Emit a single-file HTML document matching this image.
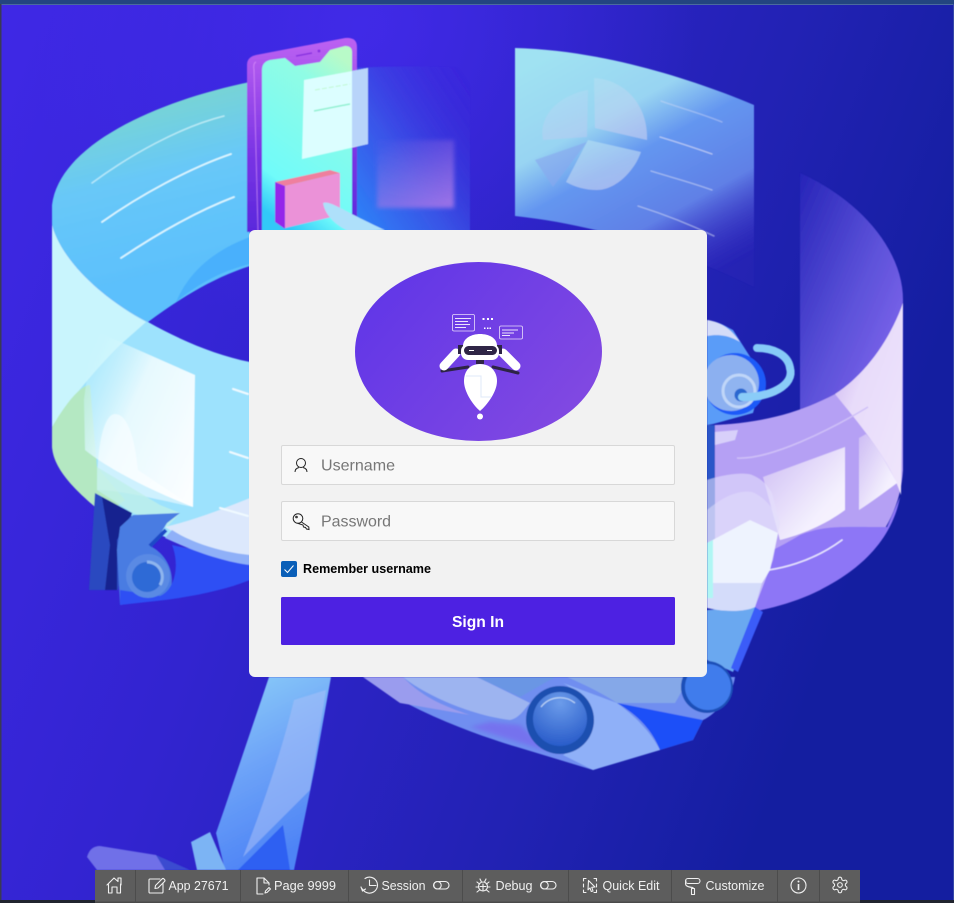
<!DOCTYPE html>
<html><head><meta charset="utf-8"><title>Sign In</title>
<style>
html,body{margin:0;padding:0;width:954px;height:903px;overflow:hidden;background:#151ea0}
svg{position:absolute;left:0;top:0;display:block}
text{font-family:"Liberation Sans",sans-serif}
</style></head><body>
<svg width="954" height="903" viewBox="0 0 954 903" xmlns="http://www.w3.org/2000/svg">
<defs>
<linearGradient id="bg" x1="0" y1="0" x2="1" y2=".35"><stop offset="0" stop-color="#3f28e6"/><stop offset=".4" stop-color="#3224d0"/><stop offset=".75" stop-color="#2222b4"/><stop offset="1" stop-color="#141ea0"/></linearGradient>
<radialGradient id="bg2" cx="0.38" cy="0.03" r="0.35"><stop offset="0" stop-color="#462cf0" stop-opacity=".7"/><stop offset="1" stop-color="#462cf0" stop-opacity="0"/></radialGradient>
<linearGradient id="lb" x1="0.45" y1="0.05" x2="0.6" y2="0.8"><stop offset="0" stop-color="#7ad6cf"/><stop offset=".45" stop-color="#68c8f8"/><stop offset="1" stop-color="#5cc0fc"/></linearGradient>
<linearGradient id="fade" x1="0" y1="1" x2="1" y2="0.1"><stop offset="0" stop-color="#2c8cfa"/><stop offset=".45" stop-color="#3a5cea" stop-opacity=".85"/><stop offset="1" stop-color="#3a30d8" stop-opacity="0"/></linearGradient>
<linearGradient id="pk" x1=".2" y1="0" x2=".8" y2="1"><stop offset="0" stop-color="#a878e0" stop-opacity=".05"/><stop offset="1" stop-color="#a878e8" stop-opacity=".85"/></linearGradient>
<linearGradient id="scr" x1="0.7" y1="0" x2="0.35" y2="1"><stop offset="0" stop-color="#b8fac8"/><stop offset=".2" stop-color="#90fce4"/><stop offset=".8" stop-color="#70fbfa"/><stop offset="1" stop-color="#30c8f8"/></linearGradient>
<linearGradient id="ph" x1="0" y1="0" x2="0" y2="1"><stop offset="0" stop-color="#bd62f2"/><stop offset=".6" stop-color="#7a34e4"/><stop offset="1" stop-color="#5a28dc"/></linearGradient>
<linearGradient id="chart" x1="0.2" y1="0" x2="0.75" y2="1"><stop offset="0" stop-color="#a0e2f2"/><stop offset=".3" stop-color="#98d4f2"/><stop offset=".47" stop-color="#6496f0"/><stop offset=".72" stop-color="#6080e6"/><stop offset="1" stop-color="#3c28c4" stop-opacity=".15"/></linearGradient>
<linearGradient id="pie" x1="0" y1="0" x2="0.4" y2="1"><stop offset="0" stop-color="#b0e0f4"/><stop offset="1" stop-color="#bccaf2"/></linearGradient>
<linearGradient id="rp" x1="0" y1="0" x2="1" y2="1"><stop offset="0" stop-color="#2624b8"/><stop offset=".5" stop-color="#5a50d8"/><stop offset="1" stop-color="#8a6cf2"/></linearGradient>
<linearGradient id="pale" x1="0" y1="0" x2="1" y2="1"><stop offset="0" stop-color="#c4a8ee"/><stop offset=".4" stop-color="#e8dcfa"/><stop offset="1" stop-color="#efe6fc"/></linearGradient>
<linearGradient id="wp" x1="0" y1="0" x2="1" y2="1"><stop offset="0" stop-color="#cdbcf4"/><stop offset=".7" stop-color="#f4f0fe"/><stop offset="1" stop-color="#f8f6ff"/></linearGradient>
<linearGradient id="wl" x1="0" y1="0.2" x2="1" y2=".9"><stop offset="0" stop-color="#c9f5fd" stop-opacity=".3"/><stop offset=".4" stop-color="#e6f9fe"/><stop offset="1" stop-color="#fcfeff"/></linearGradient>
<linearGradient id="leg" x1="0" y1="0" x2="0.3" y2="1"><stop offset="0" stop-color="#8ccff8"/><stop offset=".5" stop-color="#6ea4f8"/><stop offset="1" stop-color="#4e84f6"/></linearGradient>
<radialGradient id="knob" cx=".5" cy=".2" r=".85"><stop offset="0" stop-color="#6c9cea"/><stop offset="1" stop-color="#2558c8"/></radialGradient>
<linearGradient id="ell" x1="0" y1="0" x2="1" y2="0.6"><stop offset="0" stop-color="#5d34e8"/><stop offset="1" stop-color="#8048e2"/></linearGradient>
<filter id="s"><feGaussianBlur stdDeviation=".6"/></filter>
<filter id="s2"><feGaussianBlur stdDeviation="2"/></filter>
</defs>

<rect width="954" height="903" fill="url(#bg)"/>
<rect width="954" height="903" fill="url(#bg2)"/>

<g filter="url(#s)">
<!-- faded panel behind phone -->
<path d="M350,68 C390,66 430,66 470,68 L470,232 L350,232Z" fill="url(#fade)"/>
<rect x="377" y="140" width="77" height="68" fill="url(#pk)" filter="url(#s2)"/>

<!-- left blue band -->
<path d="M250,82 C170,98 60,140 52,205 L52,225 C62,262 105,300 148,322 C180,298 215,277 250,266Z" fill="url(#lb)"/>
<path d="M176,302 C200,282 225,270 250,264 L250,237 C215,250 190,270 176,302Z" fill="#46aefc" opacity=".9"/>
<g fill="none" stroke="#e8fbff" stroke-linecap="round">
<path d="M92,183 C130,155 180,127 224,116" stroke-width="1.500" opacity=".6"/>
<path d="M102,222 C140,195 190,168 231,154" stroke-width="1.800" opacity=".9"/>
<path d="M121,258 C160,232 200,210 234,197" stroke-width="1.800" opacity=".9"/>
</g>
<!-- pale band lower -->
<path d="M52,225 C62,262 105,300 148,322 C180,340 215,355 250,362 L250,560 C200,553 120,525 80,490 C62,472 52,455 52,445Z" fill="#9de2fd"/>
<path d="M52,225 C62,262 105,300 146,322 L120,345 C95,370 70,400 52,427Z" fill="#c9f5fd"/>
<path d="M52,427 C65,405 80,385 90,385 L97,467 L125,500 L105,515 C80,495 52,470 52,445Z" fill="#b4e8c2"/>
<path d="M93,330 L195,375 L193,507 C150,490 110,470 85,450 L84,400 Z" fill="url(#wl)"/>
<path d="M97,490 C97,440 105,414 115,414 C128,414 135,440 138,470 L193,507 C160,500 120,490 97,490Z" fill="#fff" opacity=".5"/>
<path d="M97,467 L160,505 L180,513 L167,527 L133,513 L97,490Z" fill="#bff0ea" opacity=".8"/>
<path d="M165,527 C195,520 225,508 250,498 L250,558 C220,552 190,542 165,527Z" fill="#dce8fc"/>
<g stroke="#f0faff" stroke-width="2" stroke-linecap="round"><path d="M233,389 L248,394"/><path d="M230,452 L248,458"/><path d="M220,508 L248,516"/></g>

<!-- left robot fragment -->
<path d="M95,493 L132,513 L118,590 L89,590 Z" fill="#2a48c0"/>
<path d="M102,497 L132,513 L117,540 L117,590 L105,590 L110,545Z" fill="#18248f"/>
<path d="M120,527 L133,515 L180,513 L167,523 L152,547 C172,558 178,585 165,598 L120,605 L117,550Z" fill="#4a7ce2"/>
<path d="M120,590 L120,605 L165,600 C195,596 225,590 250,580 L250,560 C220,555 195,550 172,545 C180,565 175,590 160,596Z" fill="#2f50f4"/>
<path d="M165,538 C195,552 225,562 250,565 L250,555 C220,552 190,542 172,530Z" fill="#8fb0f8"/>
<circle cx="148" cy="576" r="22" fill="#5a8ae4"/><circle cx="147" cy="577" r="15" fill="#2f6ad6"/><path d="M147,562 A15,15 0 0 1 160,585" stroke="#8fb6ee" stroke-width="3" fill="none"/>
<path d="M150,546 L166,530" stroke="#1a4ac8" stroke-width="4"/>

<!-- phone -->
<path d="M247,65 Q247,57 256,55 L345,38 Q357,37 357,47 L357,232 L247,232Z" fill="url(#ph)"/>
<path d="M262,70 Q262,62 270,60 L285,58 L295,66 L320,62 L330,50 L345,46 Q352,46 352,52 L352,232 L262,232Z" fill="url(#scr)"/>
<path d="M256,62 Q253,63 254,70 L258,232" stroke="#f0a8ff" stroke-width="1" fill="none" opacity=".5"/>
<path d="M296,56 L312,53" stroke="#8a30e0" stroke-width="1.600"/><circle cx="319" cy="51" r="1.500" fill="#8a30e0"/>
<!-- doc -->
<path d="M304,80 L368,68 L368,144 L302,159Z" fill="#dcfeff"/>
<path d="M352,71 L368,68 L368,144 L352,147Z" fill="#b8d4fa"/>
<path d="M314,111 L350,104" stroke="#8ef0d0" stroke-width="1.500"/>
<path d="M315,90 L350,84" stroke="#c0f8d0" stroke-width="1" stroke-dasharray="5 2"/>
<!-- box -->
<path d="M275,182 L330,170 L340,173 L285,186Z" fill="#ef7f9e"/>
<path d="M285,186 L340,173 L340,215 L285,228Z" fill="#eb92d8"/>
<path d="M275,182 L285,186 L285,229 L275,222Z" fill="#9428ea"/>
<path d="M323,203 C330,200 345,212 385,230 L350,232 C335,225 325,215 323,203Z" fill="#aee0fa"/>

<!-- right chart panel -->
<path d="M515,48 C600,50 690,78 754,105 L754,287 C690,255 600,225 515,216Z" fill="url(#chart)"/>
<g fill="url(#pie)" opacity=".7">
<path d="M594,78 C625,80 648,105 647,140 L595,128Z"/>
<path d="M588,90 L587,137 L543,140 C538,115 560,95 588,90Z" opacity=".7"/>
<path d="M587,142 L553,187 L535,160Z" fill="#88a8ee" opacity=".9"/>
<path d="M588,140 L641,152 C634,172 615,190 597,190 C585,190 575,187 566,182Z"/>
</g>
<g stroke="#d4dcf6" stroke-width="1.300" stroke-linecap="round" fill="none">
<path d="M661,101 C680,108 700,113 722,122" opacity=".45"/>
<path d="M660,137 C680,143 695,148 712,154" opacity=".7"/>
<path d="M651,171 C670,177 690,182 712,190" opacity=".55"/>
<path d="M638,206 C660,213 685,222 714,236" opacity=".55"/>
</g>

<!-- right band -->
<path d="M800,173 C860,200 903,250 903,300 L903,305 C885,350 860,380 833,395 L800,413Z" fill="url(#rp)"/>
<path d="M715,425 C760,423 800,413 835,394 C865,375 890,340 903,303 L903,470 C900,520 870,560 820,590 C790,605 750,615 715,615Z" fill="#b5a0f4"/>
<path d="M835,394 C865,375 890,340 903,303 L901,495 C890,460 860,425 835,394Z" fill="url(#pale)"/>
<path d="M763,477 L845,447 L845,510 C825,525 800,535 780,540Z" fill="url(#wp)"/>
<path d="M859,438 L866,434 C880,450 890,470 897,483 C885,492 870,503 859,510Z" fill="url(#wp)"/>
<path d="M900,497 C892,540 860,570 820,590 C790,605 750,615 715,615 L715,572 C745,565 775,550 800,535 C825,525 840,527 887,527Z" fill="#8d76f6"/>
<path d="M742,572 C780,572 815,560 842,540" stroke="#e8e4fe" stroke-width="1.600" fill="none" stroke-linecap="round"/>
<path d="M737,458 C770,460 830,430 868,407" stroke="#cfc0f8" stroke-width="1.500" fill="none"/>

<!-- right joint -->
<path d="M707,320 C720,322 725,326 733,330 L763,377 L753,413 L713,424 L707,425Z" fill="#5a9cf8"/>
<path d="M707,320 C722,322 732,330 740,342 C728,335 718,334 707,336Z" fill="#d4dcf8"/>
<path d="M757,348 C772,348 788,354 790,368" stroke="#86caf8" stroke-width="8" fill="none" stroke-linecap="round"/>
<circle cx="735" cy="384" r="31" fill="#1c5af8"/>
<circle cx="731" cy="383" r="28" fill="#8cb0f0"/>
<circle cx="739" cy="391" r="16" fill="#90b4f0" stroke="#c0d6f8" stroke-width="3"/>
<circle cx="741" cy="395" r="6.500" fill="#2a68d0"/>
<path d="M742,397 C770,398 795,385 790,368" stroke="#8accf8" stroke-width="8" fill="none" stroke-linecap="round"/>
<path d="M707,425 L715,425 L715,540 L707,545Z" fill="#2a56c8"/>
<path d="M715,432 L738,430 L735,440 L715,445Z" fill="#d8d0fa"/>

<!-- lower body -->
<path d="M363,677 L735,677 C733,695 715,715 703,720 L693,740 L593,770 L517,747 C470,733 410,710 363,677Z" fill="#6f8ef0"/>
<path d="M363,677 L403,677 C420,695 440,705 470,715 L400,703Z" fill="#9a9cee"/>
<path d="M403,677 C425,695 470,715 510,720 C520,718 525,708 530,703 L477,677Z" fill="#9db4f0"/>
<path d="M477,677 L555,677 L520,697Z" fill="#6a96e4"/>
<path d="M470,727 L550,752 L520,725 L490,722Z" fill="#7a5cee" opacity=".55" filter="url(#s2)"/>
<path d="M563,683 L617,703 C640,720 652,735 660,750 L593,770 L563,755 C585,745 595,700 563,683Z" fill="#8fb0f8"/>
<path d="M567,677 L690,677 L675,703 L617,703 C600,692 585,685 567,677Z" fill="#85a8e8"/>
<path d="M617,703 L703,720 L693,740 L660,750 C652,730 638,715 617,703Z" fill="#1e50f8"/>
<!-- arm below joint -->
<path d="M707,610 L755,607 L740,655 L733,672 L707,660Z" fill="#6aa8f0"/>
<path d="M755,607 L763,612 L738,672 L731,668Z" fill="#3a5cf8"/>
<circle cx="707" cy="687" r="26" fill="#1c50b8"/><circle cx="708" cy="687" r="23" fill="#3f7cec"/>
<circle cx="560" cy="720" r="34" fill="#1c50b0"/>
<path d="M585,698 A34,34 0 0 1 545,751 A34,34 0 0 0 585,698Z" fill="#7a70b8"/>
<circle cx="560" cy="719" r="27" fill="url(#knob)"/>
<path d="M541,707 A24,24 0 0 1 575,703" stroke="#bcd4f6" stroke-width="1.200" fill="none"/>

<!-- leg -->
<path d="M269,677 L331,677 L315,767 L294,870 L225,870 L216,833 L225,807Z" fill="url(#leg)"/>
<path d="M294,700 L326,690 L310,790 L243,857 C265,800 282,750 294,700Z" fill="#a8c0f8" opacity=".55"/>
<path d="M283,825 L290,870 L238,870Z" fill="#2d60f2"/>
<path d="M191,842 L210,832 L226,870 L197,870Z" fill="#7cb4f4"/>
<path d="M87,857 Q90,846 100,846 L156,855 L170,870 L97,870Z" fill="#6f70e8"/>
<path d="M156,855 L190,870 L165,870Z" fill="#3a4cd0"/>

<!-- right arm (over band) -->
<path d="M707,480 C725,474 745,472 752,475 C765,480 770,490 772,493 L780,523 L773,560 L755,607 C745,612 725,612 707,608Z" fill="#e4dffb" opacity=".6"/>
<path d="M707,510 C725,495 740,490 752,492 C765,497 775,510 780,523 L778,533 L750,520 L707,543Z" fill="#e4e0fb" opacity=".5"/>
<path d="M707,543 L750,520 L778,533 L770,570 L762,583 L707,583Z" fill="#eef3fe"/>
<path d="M707,583 L762,583 L755,607 C745,612 725,612 707,608Z" fill="#d4dcfa"/>
<path d="M707,543 L713,540 L713,598 L707,598Z" fill="#b0f6f4"/>
</g>

<!-- frame -->
<rect x="0" y="0" width="954" height="4" fill="#234580"/>
<rect x="0" y="4" width="954" height="1" fill="#4a6a9e"/>
<rect x="0" y="4" width="1.500" height="899" fill="#3a3a55"/>
<rect x="953" y="4" width="1" height="899" fill="#3648a8"/>
<rect x="0" y="900" width="954" height="3" fill="#20242e"/>

<!-- card -->
<rect x="249" y="230" width="458" height="447" rx="6" fill="#f2f2f2"/>
<ellipse cx="478.500" cy="351.500" rx="123.500" ry="89.500" fill="url(#ell)"/>

<!-- bot -->
<g stroke="#e8dcfa" fill="none" stroke-width=".8">
<rect x="452.500" y="314.500" width="22" height="16.500" rx="1.500"/>
<rect x="499.500" y="326" width="23" height="13" rx="1.500"/>
</g>
<g stroke="#ece4fc" stroke-width="1">
<path d="M455,318.500H471M455,321.500H468M455,324.500H470M455,327.500H466"/>
<path d="M502,330H518M502,333H514M502,335.500H510"/>
</g>
<g fill="#fff"><rect x="482.500" y="318" width="2" height="2"/><rect x="487" y="318" width="2" height="2"/><rect x="491" y="318" width="2" height="2"/><rect x="484" y="327.500" width="1.500" height="1.500"/><rect x="487" y="327.500" width="1.500" height="1.500"/><rect x="489.500" y="327.500" width="1.500" height="1.500"/></g>
<path d="M442,371 L468,367M493,367 L518,373" stroke="#2d2445" stroke-width="3" stroke-linecap="round"/>
<path d="M444,366 L456,353M503,353 L516,366" stroke="#fff" stroke-width="9" stroke-linecap="round"/>
<path d="M458,345 h44 v9 h-44z" fill="#2d2445"/>
<path d="M463,346 C463,338 472,334 480,334 C489,334 497,338 497,346Z" fill="#fff"/>
<rect x="461" y="344" width="38" height="16" rx="7" fill="#fff"/>
<rect x="464" y="346" width="33" height="9" rx="4.500" fill="#2f2546"/>
<path d="M469,350.500h5M487,350.500h5" stroke="#fff" stroke-width="1"/>
<rect x="476" y="360" width="8" height="4" fill="#2f2546"/>
<path d="M480,364 C490,364 497,371 497,381 C497,392 487,405 480,411 C473,405 464,392 464,381 C464,371 470,364 480,364Z" fill="#fff"/>
<path d="M466,376 H481 V397 H491" stroke="#dfe8f8" fill="none" stroke-width="1"/>
<circle cx="480" cy="416.500" r="3" fill="#fff"/>

<!-- inputs -->
<rect x="281.500" y="445.500" width="393" height="39" rx="1.500" fill="#f8f8f8" stroke="#d8d8d8"/>
<rect x="281.500" y="501.500" width="393" height="39" rx="1.500" fill="#f8f8f8" stroke="#d8d8d8"/>
<g fill="none" stroke="#222" stroke-width="1">
<circle cx="301" cy="463" r="4.500"/><path d="M295,472 C295,469 297,468 299,467.500 M307,472 C307,469 305,468 303,467.500"/>
<circle cx="298" cy="518.500" r="4.800"/><circle cx="296.500" cy="517" r=".8"/><path d="M301.500,522 L308.800,527 L309,529.500 L306.500,529 L305.500,527.500 L303.500,527 L303,525 L297.500,523.300"/>
</g>
<text x="321" y="470.500" font-size="16" fill="#777" textLength="74" lengthAdjust="spacingAndGlyphs">Username</text>
<text x="321" y="526.500" font-size="16" fill="#777" textLength="70" lengthAdjust="spacingAndGlyphs">Password</text>

<!-- checkbox -->
<rect x="281" y="561" width="16" height="16" rx="2" fill="#0a5fb8"/>
<path d="M284.500,569.500 L287.500,572.500 L293.500,565.500" fill="none" stroke="#fff" stroke-width="1"/>
<text x="303" y="573" font-size="12.500" font-weight="700" fill="#000" textLength="128" lengthAdjust="spacingAndGlyphs">Remember username</text>

<!-- button -->
<rect x="281" y="597" width="394" height="48" rx="1.500" fill="#4d21e2"/>
<text x="452" y="627" font-size="16" font-weight="700" fill="#fff" textLength="52" lengthAdjust="spacingAndGlyphs">Sign In</text>

<!-- toolbar -->
<rect x="95" y="870" width="765" height="33" fill="#5d5d5d"/>
<rect x="95" y="901.500" width="765" height="1.500" fill="#4a4a4a"/>
<g fill="#4c4c4c"><rect x="135" y="870" width="1" height="33"/><rect x="240" y="870" width="1" height="33"/><rect x="348" y="870" width="1" height="33"/><rect x="462" y="870" width="1" height="33"/><rect x="568" y="870" width="1" height="33"/><rect x="671" y="870" width="1" height="33"/><rect x="777" y="870" width="1" height="33"/><rect x="819" y="870" width="1" height="33"/></g>
<g fill="#f0f0f0" font-size="12.500">
<text x="168.500" y="890" textLength="60" lengthAdjust="spacingAndGlyphs">App 27671</text>
<text x="274" y="890" textLength="62" lengthAdjust="spacingAndGlyphs">Page 9999</text>
<text x="381.500" y="890" textLength="44" lengthAdjust="spacingAndGlyphs">Session</text>
<text x="495.500" y="890" textLength="37" lengthAdjust="spacingAndGlyphs">Debug</text>
<text x="602.500" y="890" textLength="57" lengthAdjust="spacingAndGlyphs">Quick Edit</text>
<text x="705.500" y="890" textLength="59" lengthAdjust="spacingAndGlyphs">Customize</text>
</g>
<g fill="none" stroke="#f0f0f0" stroke-width="1.100" stroke-linecap="round" stroke-linejoin="round">
<!-- home -->
<path d="M107,885 L114,878 L118,881.500 V878 H121 V885 M108.500,884.500 V893 H112 V887 H117 V893 H120.500 V884"/>
<!-- app -->
<path d="M160,879 H150 Q149,879 149,880 V892 Q149,893 150,893 H162 Q163,893 163,892 V883"/>
<path d="M155,888.500 L155.500,885.500 L162,879 Q163,878 164,879 L164.500,879.500 Q165.500,880.500 164.500,881.500 L158,888Z"/>
<!-- page -->
<path d="M264,878 H257 V894 H263 M264,878 L269,883 V885 M264,878 V883 H269"/>
<path d="M265,893 L265.500,891 L269,887.500 L270.500,889 L267,892.500Z"/>
<!-- session -->
<path d="M362.500,889 A8,8 0 1 0 365,878.500 M361,887 L362.500,891 L365.500,889 M369.500,880 V885.500 H376"/>
<!-- toggle -->
<rect x="433.500" y="881.500" width="15.500" height="7.500" rx="3.750"/><circle cx="437.500" cy="885.250" r="3.700"/>
<!-- debug -->
<circle cx="483" cy="886.500" r="4.500"/><path d="M480,879 L481.500,882 M486,879 L484.500,882 M477,882 L479.500,884 M489,882 L486.500,884 M476,887 H478.500 M490,887 H487.500 M477,892 L479.500,890 M489,892 L486.500,890 M483,884 V891 M480,886.500 H486"/>
<!-- toggle -->
<rect x="540.500" y="881.500" width="15.500" height="7.500" rx="3.750"/><circle cx="544.500" cy="885.250" r="3.700"/>
<!-- quick edit -->
<path d="M586,878.500 H583.500 V881 M583.500,884 V887 M583.500,890 V892.500 H586 M594,878.500 H596.500 V881 M596.500,884 V887 M596.500,890 V892.500 H594" />
<path d="M588.500,880.500 L595,887 L591.800,887.300 L593,891 L591.300,891.500 L590,888 L588,889.800Z"/>
<!-- roller -->
<rect x="685.500" y="878.500" width="14.500" height="5" rx="2.500"/><path d="M686,881 C684.500,885 686,887 693,887.500 V888.500 M691.500,888.500 H694.500 V894.500 H691.500Z"/>
<!-- info -->
<circle cx="798.500" cy="885.500" r="7.500"/>
<!-- gear -->
<g transform="translate(830.600,875.600) scale(.78)" stroke-width="1.400"><path d="M12.220 2h-.44a2 2 0 0 0-2 2v.18a2 2 0 0 1-1 1.730l-.43.250a2 2 0 0 1-2 0l-.15-.08a2 2 0 0 0-2.730.730l-.22.380a2 2 0 0 0 .730 2.730l.15.100a2 2 0 0 1 1 1.720v.510a2 2 0 0 1-1 1.740l-.15.090a2 2 0 0 0-.730 2.730l.22.380a2 2 0 0 0 2.730.730l.15-.08a2 2 0 0 1 2 0l.43.250a2 2 0 0 1 1 1.730V20a2 2 0 0 0 2 2h.44a2 2 0 0 0 2-2v-.18a2 2 0 0 1 1-1.730l.43-.25a2 2 0 0 1 2 0l.15.08a2 2 0 0 0 2.730-.730l.22-.39a2 2 0 0 0-.730-2.730l-.15-.08a2 2 0 0 1-1-1.740v-.5a2 2 0 0 1 1-1.740l.15-.09a2 2 0 0 0 .730-2.730l-.22-.38a2 2 0 0 0-2.730-.730l-.15.08a2 2 0 0 1-2 0l-.43-.25a2 2 0 0 1-1-1.730V4a2 2 0 0 0-2-2z"/><circle cx="12" cy="12" r="3"/></g>
</g>
<circle cx="798.500" cy="881.500" r="1" fill="#f0f0f0"/><rect x="797.700" y="884" width="1.600" height="6" fill="#f0f0f0"/>
</svg>
</body></html>
